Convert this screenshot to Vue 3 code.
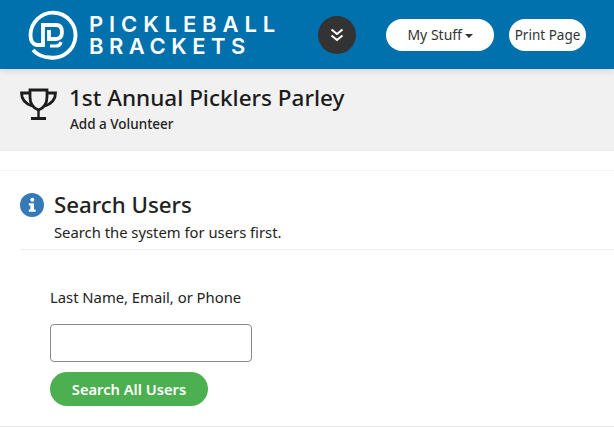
<template>
  <div class="page">
    <header class="topbar">
      <a class="logo">
        <svg class="logo-mark" width="50" height="50" viewBox="0 0 50 50" fill="none" stroke="#fff">
          <path d="M5 40 Q12 47.500 22 47.500 A22.500 22.500 0 1 0 2.500 25 Q2.500 34 9 35 H15 V15 H28 Q34 15 34 22 Q34 29 28 29 H21 V20" stroke-width="3.800" />
          <path d="M22 36 H28 Q32 36 33 32" stroke-width="3.200" />
        </svg>
        <span class="logo-text">
          <span class="logo-line1">PICKLEBALL</span>
          <span class="logo-line2">BRACKETS</span>
        </span>
      </a>
      <button class="round-btn" title="Expand">
        <svg width="16" height="14" viewBox="0 0 16 14" fill="none" stroke="#fff" stroke-width="2">
          <path d="M2.500 1.500 8 6 13.500 1.500" />
          <path d="M2.500 7.500 8 12 13.500 7.500" />
        </svg>
      </button>
      <button class="pill pill-stuff">My Stuff <span class="caret"></span></button>
      <button class="pill pill-print">Print Page</button>
    </header>

    <section class="title-band">
      <svg class="trophy" width="37" height="34" viewBox="0 0 37 34" fill="none" stroke="#1c1c1c" stroke-width="2.800">
        <path d="M10 3 H27 V10 Q27 20 18.500 23 Q10 20 10 10 Z" />
        <path d="M10 6 H1.500 Q1.500 15 12 19 M27 6 H35.500 Q35.500 15 25 19" />
        <path d="M18.500 23 V30" stroke-width="2.400" />
        <path d="M11 31.500 H26" stroke-width="3" />
      </svg>
      <div>
        <h1 class="event-name">1st Annual Picklers Parley</h1>
        <p class="event-sub">Add a Volunteer</p>
      </div>
    </section>

    <div class="spacer"></div>

    <section class="search-section">
      <div class="section-head">
        <svg class="info" width="24" height="24" viewBox="0 0 24 24">
          <circle cx="12" cy="12" r="12" fill="#337ab7" />
          <circle cx="12.300" cy="6.800" r="2" fill="#fff" />
          <path d="M8.800 10.200 H14 V16.600 H15.600 V18.800 H8.800 V16.600 H10.400 V12.400 H8.800 Z" fill="#fff" />
        </svg>
        <div>
          <h2 class="section-title">Search Users</h2>
          <p class="section-sub">Search the system for users first.</p>
        </div>
      </div>
      <form class="search-form" @submit.prevent>
        <label class="field-label" for="user-query">Last Name, Email, or Phone</label>
        <input id="user-query" v-model="query" class="field-input" type="text" />
        <button type="submit" class="search-btn">Search All Users</button>
      </form>
    </section>
    <div class="page-end"></div>
  </div>
</template>

<script setup>
import { ref } from 'vue'

const query = ref('')
</script>

<style>
html,
body {
  overflow: hidden;
}
</style>

<style scoped>
.page {
  width: 614px;
  height: 427px;
  overflow: hidden;
  background: #fff;
  font-family: "Noto Sans", "Open Sans", sans-serif;
  color: #222;
}

/* header */
.topbar {
  position: relative;
  z-index: 1;
  display: flex;
  align-items: center;
  height: 69px;
  padding-left: 28px;
  box-sizing: border-box;
  background: #0071ac;
  box-shadow: 0 2px 6px rgba(0, 0, 0, 0.12);
}
.logo {
  display: flex;
  align-items: center;
  width: 290px;
}
.logo-mark {
  flex: none;
}
.logo-text {
  display: flex;
  flex-direction: column;
  margin-left: 11px;
  color: #fff;
  font-family: "Inter", sans-serif;
  font-weight: 600;
  font-size: 22px;
  line-height: 22px;
}
.logo-line1 {
  letter-spacing: 5.900px;
}
.logo-line2 {
  letter-spacing: 5.500px;
}
.round-btn {
  display: flex;
  align-items: center;
  justify-content: center;
  flex: none;
  width: 38px;
  height: 38px;
  padding: 0;
  border: none;
  border-radius: 50%;
  background: #333;
}
.pill {
  height: 32px;
  padding: 0;
  border: none;
  border-radius: 16px;
  background: #fff;
  color: #333;
  font-family: inherit;
  font-size: 14px;
}
.pill-stuff {
  width: 108px;
  margin-left: 30px;
}
.pill-print {
  width: 77px;
  margin-left: 15px;
  font-size: 13.500px;
}
.caret {
  display: inline-block;
  margin-left: -1px;
  vertical-align: middle;
  border-top: 4px solid #333;
  border-left: 4px solid transparent;
  border-right: 4px solid transparent;
}

/* event title */
.title-band {
  display: flex;
  height: 82px;
  padding: 15px 0 0 20px;
  box-sizing: border-box;
  background: #f1f1f1;
  border-bottom: 1px solid #e9e9e9;
}
.trophy {
  flex: none;
  margin: 3px 12px 0 0;
}
.event-name {
  margin: 0;
  font-size: 22.500px;
  font-weight: 500;
  line-height: 28px;
  color: #1c1c1c;
}
.event-sub {
  margin: 3px 0 0 1px;
  font-size: 13.500px;
  font-weight: 500;
  line-height: 18px;
}
.spacer {
  height: 19px;
  border-bottom: 1px solid #f4f4f4;
}

/* search */
.search-section {
  padding: 19px 0 0 20px;
}
.section-head {
  display: flex;
  gap: 10px;
  padding-bottom: 7px;
  border-bottom: 1px solid #eee;
}
.info {
  flex: none;
  margin-top: 3px;
}
.section-title {
  margin: 0;
  font-size: 22.300px;
  font-weight: 500;
  line-height: 30px;
  color: #222;
}
.section-sub {
  margin: 2px 0 0;
  font-size: 14.800px;
  line-height: 20px;
}
.search-form {
  display: flex;
  flex-direction: column;
  align-items: flex-start;
  padding: 37px 0 20px 30px;
}
.field-label {
  font-size: 14.800px;
  line-height: 20px;
  margin-bottom: 17px;
}
.field-input {
  width: 202px;
  height: 38px;
  box-sizing: border-box;
  border: 1px solid #888;
  border-radius: 4px;
  background: #fff;
}
.search-btn {
  width: 158px;
  height: 34px;
  margin-top: 10px;
  padding: 0;
  border: none;
  border-radius: 17px;
  background: #4cb050;
  color: #fff;
  font-family: inherit;
  font-size: 14.700px;
  font-weight: 600;
}
.page-end {
  border-top: 1px solid #e6e6e6;
}
</style>
